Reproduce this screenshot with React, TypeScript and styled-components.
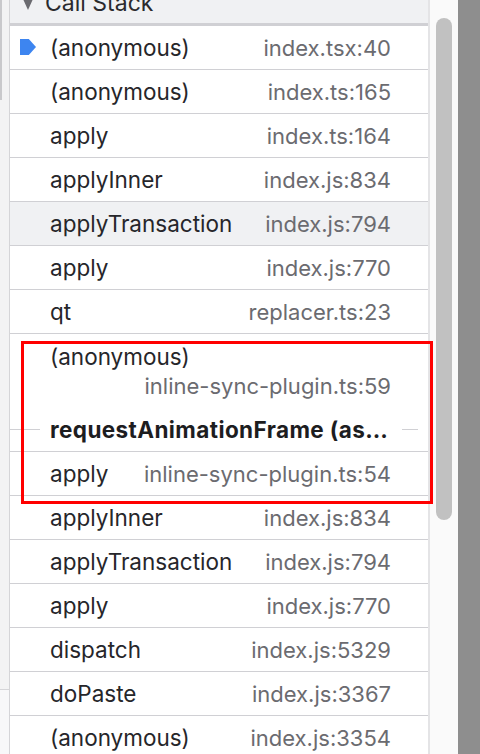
import React from "react";
import styled, { createGlobalStyle } from "styled-components";

const GlobalStyle = createGlobalStyle`
    html, body {
        margin: 0;
        padding: 0;
        background: #ffffff;
        overflow: hidden;
    }
    #root {
        height: 754px;
    }
`;

const Page = styled.div`
    position: relative;
    display: flex;
    width: 480px;
    height: 754px;
    overflow: hidden;
    font-family: "Inter", "Liberation Sans", sans-serif;
`;

const Gutter = styled.div`
    width: 9px;
    display: flex;
    flex-direction: column;
    background: #f3f3f4;
    border-right: 1px solid #d5d5d8;
`;

const GutterTop = styled.div`
    height: 100px;
    border-left: 2px solid #c9c9cc;
`;

const GutterMid = styled.div`
    height: 589px;
    border-bottom: 1px solid #d5d5d8;
`;

const GutterBottom = styled.div`
    flex: 1;
    background: #f8f8f9;
`;

const Panel = styled.div`
    width: 418px;
    display: flex;
    flex-direction: column;
    background: #ffffff;
`;

const Header = styled.div`
    height: 41px;
    margin-top: -18px;
    flex-shrink: 0;
    display: flex;
    align-items: center;
    gap: 12px;
    padding-left: 13px;
    background: #f0f1f3;
    border-bottom: 3px solid #d0d0d4;
    color: #2a2a2e;
    font-size: 23px;
`;

const Triangle = styled.span`
    width: 0;
    height: 0;
    margin-top: 4px;
    border-left: 5px solid transparent;
    border-right: 5px solid transparent;
    border-top: 11px solid #6b6b70;
`;

const Row = styled.div<{ selected?: boolean }>`
    position: relative;
    height: 43px;
    flex-shrink: 0;
    display: flex;
    align-items: center;
    justify-content: space-between;
    padding: 0 37px 0 40px;
    border-bottom: 1px solid #d0d0d4;
    background: ${({ selected }) => (selected ? "#f0f1f3" : "#ffffff")};
`;

const TallRow = styled.div`
    flex-shrink: 0;
    display: flex;
    flex-direction: column;
    padding: 11px 37px 10px 40px;
`;

const Name = styled.span`
    color: #26262a;
    font-size: 22.5px;
    line-height: 24px;
    white-space: nowrap;
`;

const Location = styled.span`
    color: #6b6b70;
    font-size: 22px;
    line-height: 24px;
    white-space: nowrap;
    text-align: right;
`;

const LocationLine = styled(Location)`
    margin-top: 5px;
`;

const AsyncRow = styled.div`
    height: 43px;
    flex-shrink: 0;
    display: flex;
    align-items: center;
    gap: 10px;
    border-bottom: 1px solid #d0d0d4;

    &::before,
    &::after {
        content: "";
        height: 1px;
        background: #d0d0d4;
    }
    &::before {
        width: 30px;
    }
    &::after {
        width: 16px;
    }
`;

const AsyncLabel = styled.span`
    width: 342px;
    color: #1d1d1f;
    font-weight: 700;
    font-size: 22.5px;
    letter-spacing: 0.4px;
    white-space: nowrap;
    overflow: hidden;
    text-overflow: ellipsis;
`;

const ActiveMarker = styled.span`
    position: absolute;
    left: 10px;
    top: 13px;
    width: 16px;
    height: 16px;
    background: #3d85f0;
    clip-path: polygon(0 0, 55% 0, 100% 50%, 55% 100%, 0 100%);
`;

const Track = styled.div`
    width: 28px;
    border-left: 2px solid #e4e4e6;
    background: #fafafa;
    padding-top: 18px;
    display: flex;
    justify-content: center;
`;

const Thumb = styled.div`
    width: 16px;
    height: 502px;
    border-radius: 8px;
    background: #c1c1c1;
`;

const Edge = styled.div`
    flex: 1;
    background: #8e8e8e;
`;

const Highlight = styled.div`
    position: absolute;
    left: 21px;
    top: 341px;
    width: 406px;
    height: 157px;
    border: 3px solid #ff0000;
    pointer-events: none;
`;

type Frame = { name: string; loc: string; selected?: boolean; active?: boolean };

const topFrames: Frame[] = [
    { name: "(anonymous)", loc: "index.tsx:40", active: true },
    { name: "(anonymous)", loc: "index.ts:165" },
    { name: "apply", loc: "index.ts:164" },
    { name: "applyInner", loc: "index.js:834" },
    { name: "applyTransaction", loc: "index.js:794", selected: true },
    { name: "apply", loc: "index.js:770" },
    { name: "qt", loc: "replacer.ts:23" },
];

const bottomFrames: Frame[] = [
    { name: "apply", loc: "inline-sync-plugin.ts:54" },
    { name: "applyInner", loc: "index.js:834" },
    { name: "applyTransaction", loc: "index.js:794" },
    { name: "apply", loc: "index.js:770" },
    { name: "dispatch", loc: "index.js:5329" },
    { name: "doPaste", loc: "index.js:3367" },
    { name: "(anonymous)", loc: "index.js:3354" },
];

const FrameRow: React.FC<{ frame: Frame }> = ({ frame }) => (
    <Row selected={frame.selected}>
        {frame.active && <ActiveMarker />}
        <Name>{frame.name}</Name>
        <Location>{frame.loc}</Location>
    </Row>
);

const App: React.FC = () => {
    return (
        <>
            <GlobalStyle />
            <Page>
                <Gutter>
                    <GutterTop />
                    <GutterMid />
                    <GutterBottom />
                </Gutter>
                <Panel>
                    <Header>
                        <Triangle />
                        <span>Call Stack</span>
                    </Header>
                    {topFrames.map((f, i) => (
                        <FrameRow key={"t" + i} frame={f} />
                    ))}
                    <TallRow>
                        <Name>(anonymous)</Name>
                        <LocationLine>inline-sync-plugin.ts:59</LocationLine>
                    </TallRow>
                    <AsyncRow>
                        <AsyncLabel>requestAnimationFrame (async)</AsyncLabel>
                    </AsyncRow>
                    {bottomFrames.map((f, i) => (
                        <FrameRow key={"b" + i} frame={f} />
                    ))}
                </Panel>
                <Track>
                    <Thumb />
                </Track>
                <Edge />
                <Highlight />
            </Page>
        </>
    );
};

export default App;
